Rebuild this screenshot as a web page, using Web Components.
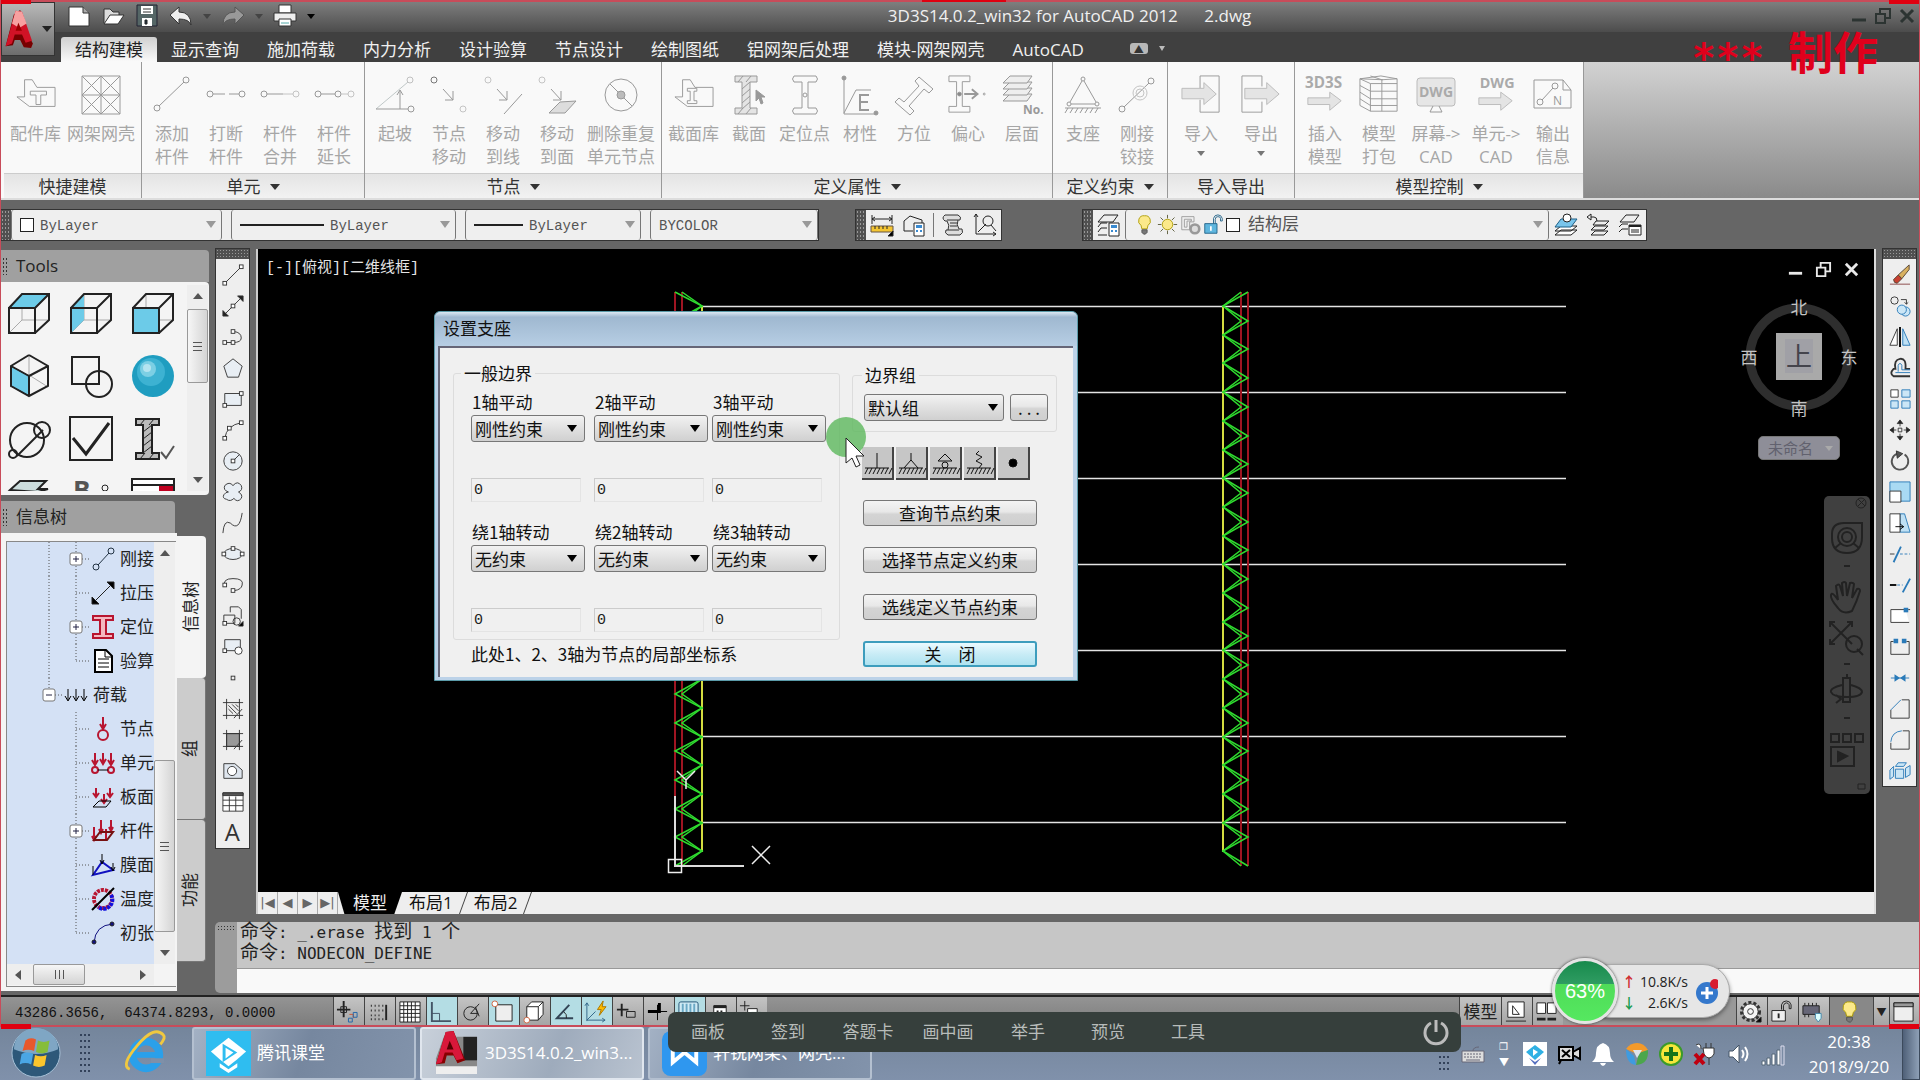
<!DOCTYPE html>
<html lang="zh-CN">
<head>
<meta charset="utf-8">
<title>3D3S14.0.2_win32 for AutoCAD 2012</title>
<style>
	html, body {
		margin: 0;
		height: 100%;
		overflow: hidden;
	}
	body {
		font: 17px/22px "Open Sans", "Noto Sans CJK SC", sans-serif;
		background: #666;
		color: #222;
	}
</style>
</head>
<body>
<cad-desktop></cad-desktop>
<script>
(function() {
	// every icon: [viewBox size, markup]
	const I = {};
	const g = (size, markup) => [size, markup];
	const folder = '<path d="M9 23V5h8l5 8h19v20H14L1 23h8z"/>';
	const ring = (x, y, r) => `<circle cx="${x}" cy="${y}" r="${r || 3}"/>`;
	const dot = (x, y) => `<rect x="${x - 2}" y="${y - 2}" width="4" height="4" fill="#fff"/>`;
	const arrowDR = '<path d="M14 14l10 11M24 16v9h-8"/>';
	const bigArrow = '<path fill="#e4e4e4" stroke="#bbb" d="M3 24h23v-6l12 9-12 10v-6H3z"/>';

	// ribbon
	I.lib = g(42, folder + '<path d="M15 17h17v4h-6v10h-5V21h-6z"/>');
	I.mesh = g(40, '<path d="M1 1h38v38H1zM20 1v38M1 20h38M1 1l38 38M39 1L1 39M20 1L1 20l19 19 19-19z"/>');
	I.add = g(40, ring(5, 33) + ring(34, 5) + '<path d="M7 31L32 7"/>');
	I.cut = g(40, ring(4, 19) + ring(36, 19) + '<path d="M7 19h12M23 19h10"/>');
	I.merge = g(40, ring(4, 19) + '<path d="M7 19h16"/><g stroke="#c4c4c4"><path d="M23 19h10"/>' + ring(36, 19) + '</g>');
	I.extend = g(40, ring(4, 19) + ring(24, 19) + '<path d="M7 19h14"/><g stroke="#c4c4c4"><path d="M27 19h7"/>' + ring(37, 19) + '</g>');
	I.slope = g(40, '<path stroke="#c0c8c8" d="M1 34L33 7"/><g stroke="#c0c0c0">' + ring(35, 5) + '</g><path d="M1 34h32M25 34V16m-3 4l3-5 3 5"/>' + ring(36, 34));
	I.nmove = g(40, '<g stroke="#777">' + ring(5, 5) + '</g>' + arrowDR + '<g stroke="#c4c4c4">' + ring(34, 34) + '</g>');
	I.lmove = g(40, '<g stroke="#c4c4c4">' + ring(5, 5) + '</g>' + arrowDR + '<path d="M21 39l18-20"/>');
	I.pmove = g(40, '<g stroke="#c4c4c4">' + ring(5, 5) + '</g>' + arrowDR + '<path fill="#ddd" d="M12 38l11-11 16-1-11 12z"/>');
	I.dedupe = g(40, ring(20, 20, 16) + '<path d="M9 9l22 22"/><circle cx="20" cy="20" r="4" fill="#bbb"/>');
	I.lib2 = g(42, folder + '<path d="M14 14h10v3h-3v10h3v3H14v-3h3V17h-3z"/>');
	I.section = g(40, '<path fill="#e4e4e4" d="M6 1h22v6h-7v26h7v6H6v-6h7V7H6z"/><path d="M9 7l5-6m3 6l5-6M13 14l8-7M13 21l8-7M13 28l8-7m-8 13l8-7M9 39l5-6m3 6l5-6"/><path fill="#999" d="M27 15v11l3-3 2 6 2-1-2-6h4z"/>');
	I.point = g(40, '<path d="M9 1h22q3 3 0 6h-8v26h8q3 3 0 6H9q-3-3 0-6h8V7H9q-3-3 0-6z"/>' + ring(20, 20, 2));
	I.mat = g(40, '<path d="M4 2v37h32M4 38l12-23h15"/><circle cx="4" cy="3" r="2" fill="#999"/><circle cx="36" cy="38" r="2" fill="#999"/><path stroke-width="2" d="M29 20h-9v15h9M20 27h8"/>');
	I.orient = g(40, '<path d="M25 2l14 12-4 4-5-4L15 31l5 5-4 4L1 27l4-4 5 4 15-16-4-5z"/>');
	I.offset = g(42, '<path d="M1 1h22v6h-8v26h8v6H1v-6h8V7H1z"/><path stroke-width="2" d="M17 20h13m-5-5l6 5-6 5"/><circle cx="12" cy="20" r="2" fill="#888"/><circle cx="38" cy="20" r="1"/>');
	I.layers = g(40, '<g fill="#eee"><path d="M1 26l7-7h22l-5 7z"/><path d="M1 20l7-7h22l-5 7z"/><path d="M1 14l7-7h22l-5 7z"/><path d="M1 8l7-7h22l-5 7z"/></g><text x="21" y="39" font-size="12" font-weight="bold">No.</text>');
	I.support = g(40, ring(20, 4, 2) + ring(6, 29, 2) + ring(34, 29, 2) + '<path d="M19 6L7 27m14-21l12 21M8 29h24M2 33h36M5 33l-3 5m8-5l-3 5m8-5l-3 5m8-5l-3 5m8-5l-3 5m8-5l-3 5m8-5l-3 5"/>');
	I.hinge = g(40, ring(5, 34) + ring(34, 6) + '<path d="M7 32L32 8"/><g stroke="#c4c4c4">' + ring(23, 18, 7) + ring(23, 18, 4) + '</g>');
	I.imp = g(42, '<path d="M20 14V1h20v38H20V26"/><path fill="#e4e4e4" stroke="#bbb" d="M1 14h23V8l13 12-13 11v-6H1z"/>');
	I.exp = g(42, '<path d="M22 12V1H1v38h21V28"/><path fill="#e4e4e4" stroke="#bbb" d="M4 14h23V8l13 12-13 11v-6H4z"/>');
	I.ins = g(42, '<text x="0" y="14" font-size="16" font-weight="bold" style="fill:#aaa">3D3S</text>' + bigArrow);
	I.pack = g(42, '<path d="M1 4l22-3 17 3v34H12L1 32zM12 9h28M12 17h28M12 25h28M12 32h28M1 4l11 5v29M1 11l11 6M1 18l11 7M1 25l11 7M24 5v33M1 4l24 1M12 1l12 4 16-1"/>');
	I.screen = g(40, '<rect x="1" y="3" width="38" height="28" rx="3" fill="#e6e6e6" stroke="#bbb"/><path d="M17 31l-3 6h12l-3-6"/><text x="3" y="22" font-size="14" font-weight="bold" style="fill:#aaa">DWG</text>');
	I.dwg = g(42, '<text x="4" y="14" font-size="15" font-weight="bold" style="fill:#aaa">DWG</text>' + bigArrow);
	I.out = g(40, '<path d="M1 5h29l8 10v18H1zM30 5v10h8"/>' + ring(7, 27) + ring(22, 11) + '<path d="M9 25l11-12"/><text x="20" y="30" font-size="12">N</text>');

	// quick access
	I.newdoc = g(24, '<path fill="#fff" stroke="#333" d="M2 3h14l6 6v13H2z"/><path fill="#aaa" stroke="#333" d="M16 3v6h6"/>');
	I.open = g(24, '<path fill="#ddd" stroke="#333" d="M3 19V5h6l3 3h6v4"/><path fill="#fff" stroke="#333" d="M3 20l6-9h14l-6 9z"/>');
	I.save = g(24, '<path fill="#566" stroke="#223" d="M2 1h20v21H2z"/><path fill="#fff" stroke="none" d="M6 2h12v8H6zM7 14h10v8H7z"/><path stroke="#333" d="M8 5h8M8 8h8"/><path fill="#234" d="M10 16h2v4h-2z"/>');
	I.undo = g(24, '<path fill="#eee" stroke="#333" d="M1 11l9-8v5q12 0 12 13-2-6-12-6v5z"/>');
	I.redo = g(24, '<path fill="#999" stroke="#555" d="M23 11l-9-8v5Q2 8 2 21q2-6 12-6v5z"/>');
	I.print = g(24, '<path fill="#fff" stroke="#333" d="M6 1h12v8H6z"/><path fill="#eee" stroke="#333" d="M1 9h22v8H1z"/><path fill="#fff" stroke="#333" d="M6 15h12v7H6z"/><path stroke="#5aa" d="M8 19h8"/>');
	I.logo = g(44, '<path fill="#700" stroke="none" d="M4 41l9-35 7-5 10 30 4 7-2 5-8-1-4-8h-6l-2 6z"/><path fill="#d11226" stroke="none" d="M4 41L15 2l7 1 11 32-7 2-4-9h-8l-3 10z"/><path fill="#f7a0a0" stroke="none" d="M11 16l4-14 7 1 5 13-8 5z"/><path fill="#900" stroke="none" d="M15 24l3-9 4 9z"/>');

	// toolbars
	I.ruler = g(24, '<path stroke="#222" d="M2 2v9M22 2v9M2 6h20M5 4L2 6l3 2M19 4l3 2-3 2"/><path fill="#f4c532" stroke="#654" d="M1 13h22v6H1z"/><path stroke="#222" d="M5 13v3m4-3v3m4-3v3m4-3v3"/><path fill="#000" d="M23 18v5h-5z"/>');
	I.calc = g(24, '<path stroke="#222" d="M11 18H2V8l6-5 12 4v3"/><path fill="#fff" stroke="#222" d="M12 10h10v13H12z"/><path fill="#3a8ad0" stroke="none" d="M14 12h6v3h-6zM14 17h2v2h-2zM18 17h2v2h-2z"/>');
	I.scroll = g(24, '<path fill="#ddd" stroke="#333" d="M4 2h13q4 2 2 5h-2q-2 5 1 9h3q2 4-2 6H7q-4-2-2-5h2q2-5-1-9H4Q0 5 4 2z"/><path stroke="#333" d="M6 7h11M9 10h7M9 13h7M7 17h11"/>');
	I.find = g(24, '<path stroke="#222" d="M3 1v20h20M1 4l2-3 2 3M20 19l3 2-3 2M5 19l8-8M18 12l5 6"/><circle cx="15" cy="8" r="5" stroke="#222"/>');
	I.layprop = g(24, '<path stroke="#222" d="M1 14l3-4h6M1 19l3-4h6M1 9l6-7h14l-5 7zM1 22h9"/><path fill="#fff" stroke="#222" d="M12 10h10v13H12z"/><path fill="#3a8ad0" stroke="none" d="M14 12h6v3h-6zM14 17h2v2h-2zM18 17h2v2h-2z"/>');
	I.bulb = g(24, '<path fill="#fbe98a" stroke="#a90" d="M12 2a6 6 0 0 1 4 11l-1 4H9l-1-4a6 6 0 0 1 4-11z"/><path fill="#777" stroke="#555" d="M9 18h6v3l-2 2h-2l-2-2z"/>');
	I.sun = g(24, '<circle cx="12" cy="12" r="6" fill="#fbe98a" stroke="#a90"/><path stroke="#553" d="M12 1v4M12 19v4M1 12h4M19 12h4M4 4l3 3M17 17l3 3M4 20l3-3M17 7l3-3"/>');
	I.vpf = g(24, '<path stroke="#999" d="M2 3h14v6h-5v9H2zM5 6h8v2H8v7H5z"/><circle cx="17" cy="17" r="5" stroke="#999" stroke-width="3" fill="#ddd"/>');
	I.unlock = g(24, '<path stroke="#1d5f86" d="M12 11V5q1-4 5-4t5 4v3h-2V5q0-2-3-2t-3 3v5"/><path fill="#5fb6de" stroke="#1d5f86" d="M2 11h14v11H2z"/><path stroke="#fff" stroke-width="2" d="M9 14v5"/>');
	I.curlay = g(24, '<path stroke="#222" fill="#fff" d="M1 22l6-5h16l-6 5zM1 18l6-5h16l-6 5z"/><path fill="#79c5ec" stroke="#1d5f86" d="M1 14l6-8h16l-6 8z"/><circle cx="13" cy="5" r="4" fill="#fff" stroke="#222"/>');
	I.prevlay = g(24, '<path stroke="#222" d="M1 4l4-3v6zM5 4h3q3 0 3 4M5 22l4-4h13l-4 4zM5 17l4-4h13l-4 4zM7 12l3-4h13l-4 4z"/>');
	I.laystate = g(24, '<path stroke="#222" d="M2 9l6-7h13l-5 7zM1 14l3-3h6M1 19l3-3h6"/><path fill="#fff" stroke="#222" d="M11 12h12v10H11z"/><path stroke="#222" stroke-width="2" d="M11 13h12"/><path stroke="#222" d="M13 17h8M13 19h8"/>');

	// draw
	I.line = g(24, '<path d="M3 21L21 3"/>' + dot(3, 21) + dot(21, 3));
	I.xline = g(24, '<path d="M2 22L22 2"/><path fill="#222" d="M1 23v-6l6 6zM23 1v6l-6-6z"/>' + dot(12, 12));
	I.pline = g(24, '<path d="M2 18h10q9 0 9-5 0-6-8-7"/>' + dot(3, 18) + dot(12, 18) + dot(12, 6));
	I.pgon = g(24, '<path fill="#e8eef4" d="M12 2l10 8-4 12H6L2 10z"/>');
	I.rect = g(24, '<path fill="#e8eef4" d="M3 6h18v13H3z"/>' + dot(3, 19) + dot(21, 6));
	I.arc = g(24, '<path d="M3 21Q5 7 21 4"/>' + dot(3, 21) + dot(8, 10) + dot(21, 4));
	I.circle = g(24, '<circle cx="12" cy="12" r="10" fill="#e8eef4"/><path d="M12 12l7-7"/>' + dot(12, 12));
	I.cloud = g(24, '<path fill="#e8eef4" d="M7 12q-6-2-4-7 5-5 9 0 5-6 9 0 2 5-3 7 5 3 3 7-4 5-8 0-4 4-8 1-5-1-3-5 2-3 5-3z"/>');
	I.spline = g(24, '<path d="M1 23Q2 8 9 12q10 10 13-11"/>');
	I.ellipse = g(24, '<ellipse cx="12" cy="12" rx="10" ry="6" fill="#e8eef4"/>' + dot(2, 12) + dot(22, 12) + dot(12, 6));
	I.earc = g(24, '<path d="M3 14Q0 5 12 5t10 7q-1 5-8 6"/>' + dot(3, 12) + dot(12, 18));
	I.insb = g(24, '<path d="M9 8V2h9l3 3v10M2 11h12v9H2z"/><circle cx="16" cy="18" r="4"/><path fill="#000" d="M23 18v5h-5z"/>' + dot(3, 20));
	I.mkb = g(24, '<path fill="#e8eef4" d="M3 4h17v12H3z"/><circle cx="18" cy="16" r="4" fill="#fff"/>' + dot(3, 16));
	I.pt = g(24, '<rect x="10" y="10" width="4" height="4"/>');
	I.hatch = g(24, '<path d="M1 5h22M1 19h22M5 1v22M19 1v22M7 8l9 9M7 12l5 5M11 7l7 7M15 7l3 3M22 12L13 22"/>');
	I.grad = g(24, '<path fill="#999" d="M5 5h14v14H5z"/><path d="M1 5h22M1 19h22M5 1v22M19 1v22M22 12L13 22"/>');
	I.region = g(24, '<path fill="#dfe6ee" d="M2 4h12l8 7v9H2z"/><circle cx="11" cy="12" r="5" fill="#fff"/>');
	I.table = g(24, '<path fill="#fff" d="M1 2h22v20H1zM1 10h22M1 16h22M8 6v16M15 6v16"/><path fill="#555" d="M1 2h22v3H1z"/>');
	I.mtext = g(24, '<text x="3" y="21" font-size="26" style="fill:#333">A</text>');

	// modify
	I.erase = g(24, '<path stroke="#844" d="M1 22h22"/><path fill="#d8b060" stroke="#543" d="M10 12L22 1v5L14 16z"/><path fill="#c84030" stroke="#543" d="M5 17l5-5 4 4-5 5q-4 0-4-4z"/>');
	I.copy = g(24, '<circle cx="6" cy="6" r="4"/><path d="M13 5h6v5m-2-2l2 2 2-2"/><g stroke="#2a7ab8" fill="#cbe6f6"><circle cx="18" cy="18" r="5"/><circle cx="14" cy="16" r="5"/></g>');
	I.mirror = g(24, '<path fill="#fff" d="M9 3v18H1z"/><path fill="#bfe0f4" stroke="#2a7ab8" d="M15 3v18h8z"/><path stroke-width="2" stroke="#000" d="M12 1v22"/>');
	I.offs = g(24, '<path stroke-width="2" d="M23 21H5q-5-3 0-8h2Q5 3 12 2t6 11h5"/><path stroke="#2a7ab8" d="M23 17H7M10 16V9q2-4 4 0v5h9"/>');
	I.array = g(24, '<path fill="#fff" d="M2 2h8v8H2z"/><g stroke="#2a7ab8" fill="#cbe6f6"><path d="M14 2h9v8h-9zM2 14h8v8H2zM14 14h9v8h-9z"/></g>');
	I.move = g(24, '<path fill="#222" d="M12 1l3 4h-6zM12 23l3-4h-6zM1 12l4-3v6zM23 12l-4-3v6z"/><path d="M12 4v4m0 8v4M4 12h4m8 0h4M10 10h4v4h-4z"/>');
	I.rotate = g(24, '<path stroke="#555" stroke-width="2" d="M9 4a9 9 0 1 0 8 1"/><path fill="#555" d="M8 1l7 3-6 5z"/>');
	I.scale = g(24, '<path fill="#a9daf3" stroke="#2a7ab8" d="M1 1h22v21H1z"/><path fill="#fff" d="M1 11h12v12H1z"/>');
	I.stretch = g(24, '<path fill="#bfe0f4" stroke="#2a7ab8" d="M12 2h5l6 20H12z"/><path fill="#fff" d="M1 2h11v20H1z"/><path stroke="#000" d="M7 16h9m-4-3l4 3-4 3"/>');
	I.trim = g(24, '<path d="M1 12h5"/><path stroke="#2a7ab8" stroke-width="2" d="M5 21l8-17"/><path stroke="#2a7ab8" stroke-dasharray="3 2" d="M12 12h11"/>');
	I.ext = g(24, '<path stroke="#000" stroke-width="2" d="M1 12h7"/><path stroke="#2a7ab8" stroke-dasharray="3 2" d="M9 12h6"/><path stroke="#2a7ab8" stroke-width="2" d="M15 20l8-15"/>');
	I.brk1 = g(24, '<path fill="#fff" d="M18 5H2v14h20"/><path fill="#2a7ab8" stroke="none" d="M16 3h5v5h-5z"/><path d="M21 5h2"/>');
	I.brk2 = g(24, '<path d="M5 6H2v14h20V6h-3"/><path fill="#2a7ab8" stroke="none" d="M5 3h5v5H5zM14 3h5v5h-5z"/>');
	I.join = g(24, '<path stroke="#2a7ab8" d="M2 12h20"/><path fill="#2a7ab8" stroke="none" d="M6 8l6 4-6 4zM18 8l-6 4 6 4z"/>');
	I.chamf = g(24, '<path d="M14 2h8v20H2v-9"/><path stroke="#2a7ab8" d="M2 13L13 2"/>');
	I.fillet = g(24, '<path d="M15 2h7v20H2v-7"/><path stroke="#2a7ab8" d="M2 14Q3 3 14 2"/>');
	I.explode = g(24, '<g stroke="#2a7ab8" fill="#cbe6f6"><path d="M7 10h9v10H7zM7 7l3-4h9l-3 4zM18 9l5-3v10l-5 3zM1 11l4-4v11l-4 3z"/></g>');

	// palette
	const cube = '<path stroke-width="2" d="M2 16h26v25H2zM2 16L15 2h27v26L28 41M28 16L42 2"/>';
	const back = '<path stroke="#aaa" d="M15 2v26L2 41M15 28h27"/>';
	I.cubeTop = g(44, back + '<path fill="#6ccbe8" d="M2 16L15 2h27L28 16z"/>' + cube);
	I.cubeLeft = g(44, back + '<path fill="#6ccbe8" stroke="none" d="M2 16L15 2v26L2 41z"/>' + cube);
	I.cubeFront = g(44, back + '<path fill="#6ccbe8" d="M2 16h26v25H2z"/>' + cube);
	I.cubeIso = g(44, '<path stroke="#aaa" d="M22 1v20L3 33m19-12l19 12"/><path fill="#6ccbe8" d="M4 12l18 10v20L4 32z"/><path stroke-width="2" d="M22 1l19 11v20L22 42 4 32V12L22 1M4 12l18 10v20M22 22l19-10"/>');
	I.shapes = g(44, '<g stroke-width="2"><path d="M3 3h27v27H3z"/><circle cx="30" cy="30" r="13"/></g>');
	I.sphere = g(44, '<circle cx="22" cy="22" r="21" fill="#1f9dc0" stroke="none"/><circle cx="20" cy="18" r="14" fill="#3db2d2" stroke="none"/><circle cx="17" cy="15" r="8" fill="#7ccfe4" stroke="none"/><circle cx="16" cy="14" r="4" fill="#b4e4f0" stroke="none"/>');
	I.orbit = g(44, '<g stroke-width="2"><circle cx="20" cy="24" r="17"/><circle cx="35" cy="14" r="8"/><path d="M10 40L36 14"/><circle cx="6" cy="38" r="4"/></g>');
	I.check = g(44, '<path stroke-width="2" d="M1 1h42v43H1z"/><path stroke-width="3" d="M4 22l13 16L40 7"/>');
	I.ibeam = g(44, '<path fill="#bbb" stroke-width="2" d="M5 3h23v6h-7v28h7v6H5v-6h7V9H5z"/><path d="M9 9l5-6m4 6l5-6M12 16l9-7M12 23l9-7M12 30l9-7m-9 14l9-7M9 43l5-6m4 6l5-6"/><path stroke="#555" stroke-width="2" d="M30 36l5 6 8-12"/>');
	I.para = g(44, '<path fill="#cdd" stroke-width="2" d="M3 12L13 3h26l-8 8h10l-10 3z"/>');
	I.bs = g(44, '<text x="4" y="22" font-size="26" font-weight="bold" style="fill:#555">B</text><circle cx="36" cy="10" r="3"/>');
	I.tbl = g(44, '<path fill="#fff" stroke-width="2" d="M1 1h42v20H1zM1 7h42"/><path fill="#c00020" stroke="none" d="M28 8h14v10H28z"/>');

	// tree
	const red = '#b81530';
	I.tHinge = g(24, '<g stroke="#234">' + ring(5, 20) + ring(20, 4) + '<path d="M7 18L18 6"/></g>');
	I.tTension = g(24, '<path d="M3 21L21 3"/><path fill="#000" d="M1 23v-7l7 7zM23 1v7l-7-7z"/>');
	I.tBeam = g(24, `<path fill="#f4b8c0" stroke="${red}" stroke-width="2" d="M2 1h20v4h-7v14h7v4H2v-4h7V5H2z"/>`);
	I.tDoc = g(24, '<path fill="#fff" stroke="#000" stroke-width="2" d="M4 1h11l6 6v16H4z"/><path stroke="#000" d="M7 10h11M7 14h11M7 18h11M14 1v7h7"/>');
	I.tLoad = g(24, '<path stroke="#000" d="M4 6v11m-3-4l3 5 3-5M12 6v11m-3-4l3 5 3-5M20 6v11m-3-4l3 5 3-5"/>');
	I.tNode = g(24, `<g stroke="${red}" stroke-width="2"><path d="M12 0v11m-3-4l3 5 3-5"/><circle cx="12" cy="18" r="5"/></g>`);
	I.tUnit = g(24, `<g stroke="${red}" stroke-width="2"><path d="M4 2v11m-3-4l3 5 3-5M12 2v9m-3-3l3 5 3-5M20 2v11m-3-4l3 5 3-5"/>${ring(4, 19)}${ring(20, 19)}</g><path stroke="#000" d="M7 19h10"/>`);
	I.tPlate = g(24, `<g stroke="${red}" stroke-width="2"><path d="M5 3v8m-3-3l3 4 3-4M13 9v8m-3-3l3 4 3-4M19 3v8m-3-3l3 4 3-4"/></g><path stroke="#000" d="M2 22l6-6h12l-5 6z"/>`);
	I.tRod = g(24, `<g stroke="${red}" stroke-width="2"><path d="M10 1v12m-2-3l2 4 2-4M20 1v10m-2-3l2 4 2-4M3 8v12m-2-3l2 4 2-4M15 10v10"/></g><path stroke="#711" stroke-width="2" d="M3 21l6-8h13l-6 8z"/>`);
	I.tMembrane = g(24, '<path stroke="#1010c0" stroke-width="2" d="M2 22l9-13 11 8z"/><path stroke="#000" d="M11 1v9m-2-3l2 4 2-4M2 13v9M22 10v7m-2-3l2 4 2-4"/>');
	I.tTemp = g(24, `<circle cx="12" cy="12" r="9" stroke="${red}" stroke-width="4" stroke-dasharray="3 1"/><path stroke="#1010e0" stroke-width="4" stroke-dasharray="3 1" d="M20 8a9 9 0 0 1-13 12"/><circle cx="12" cy="12" r="7" fill="#d4e1f5" stroke="none"/><path stroke="#000" stroke-width="2" d="M1 23L23 1"/>`);
	I.tInit = g(24, '<path stroke="#101080" d="M3 22Q4 4 22 3"/><circle cx="3" cy="21" r="2" fill="#101080"/><circle cx="21" cy="3" r="2" fill="#101080"/>');

	// status bar
	I.s1 = g(24, '<path stroke-width="2" d="M1 10h14M8 1v17"/><path d="M5 7h6v6H5z"/><path stroke="#c53" d="M14 15h4v4"/><path stroke="#26a" d="M18 13h4v5h-4zM13 19h4v4h-4z"/>');
	I.s2 = g(24, '<path stroke-dasharray="1 3" stroke-width="2" d="M4 6h15M4 11h15M4 16h12M4 20h15"/><path stroke-width="2" d="M20 5v16"/>');
	I.s3 = g(24, '<path fill="#fff" d="M2 2h21v21H2zM6 2v21M10 2v21M14 2v21M18 2v21M2 6h21M2 10h21M2 14h21M2 18h21"/>');
	I.s4 = g(24, '<path stroke="#456" stroke-width="2" d="M3 2v20h20"/><path stroke="#456" d="M3 14h8v8"/>');
	I.s5 = g(24, '<circle cx="11" cy="14" r="7"/><path d="M11 14L20 4M11 14h8M16 7l4 10"/>');
	I.s6 = g(24, '<path fill="#eee" d="M5 5h17v17H5z"/><circle cx="4" cy="4" r="3" stroke="#c64" fill="#fff"/>');
	I.s7 = g(24, '<path fill="#fff" d="M5 7l5-5h12v13l-5 6H5zM5 7h12v14M17 7l5-5"/><circle cx="5" cy="21" r="3" stroke="#c64" fill="#fff"/>');
	I.s8 = g(24, '<path stroke="#345" stroke-width="2" d="M17 5L4 19h17"/><path d="M11 12q4 3 3 7"/>');
	I.s9 = g(24, '<path stroke="#368" d="M3 22V3m-2 3l2-3 2 3M3 21h19m-3-2l3 2-3 2M3 21l9-9"/><path fill="#fb0" stroke="#a70" d="M20 1l-6 9h4l-2 6 7-9h-4z"/>');
	I.s10 = g(24, '<path stroke-width="2" d="M2 10h12M7 4v13"/><path d="M12 12h9v6h-9z"/>');
	I.s11 = g(24, '<path stroke="#000" stroke-width="3" d="M2 12h12V3"/><path stroke="#000" d="M12 12h10M12 5v16"/>');
	I.s12 = g(24, '<rect x="2" y="2" width="20" height="20" rx="2" fill="#cfeaf4" stroke="#257"/><path stroke="#6aa8c4" stroke-width="14" stroke-dasharray="2 2" d="M5 11h14"/>');
	I.s13 = g(24, '<path fill="#fff" d="M6 6h13v18H6z"/><path stroke-width="3" d="M6 7h13"/><path stroke-width="2" stroke-dasharray="2 2" d="M9 12h8M9 16h8"/>');
	I.s14 = g(24, '<path d="M1 6h10M6 1v10"/><path fill="#fff" d="M9 9h10v10H9z"/><path fill="#cfc" stroke="#274" d="M13 13h10v10H13z"/>');
	I.model = g(24, '<path fill="#fff" d="M4 2h17v16H4zM2 22h21"/><path d="M9 6v9h7z"/>');
	I.qview = g(24, '<path fill="#fff" d="M2 3h9v11H2zM13 3h9v11h-9z"/><path stroke-width="3" d="M2 20h9M13 20h9"/>');
	I.gear = g(24, '<circle cx="12" cy="12" r="9" stroke="#333" stroke-width="4" stroke-dasharray="3 2"/><circle cx="12" cy="12" r="8" fill="#f4f4f4" stroke="#333"/><circle cx="12" cy="12" r="3" stroke="#333"/><path fill="#000" d="M23 18v5h-5z"/>');
	I.slock = g(24, '<path d="M12 10V5q1-4 5-4t5 4v4h-2V5q-1-2-3-2t-3 3v5"/><path fill="#eee" d="M2 11h14v11H2z"/><path stroke-width="2" d="M9 14v5"/>');
	I.chip = g(24, '<path fill="#667" d="M2 6h17v9H2zM4 3v3m4-3v3m4-3v3m4-3v3M4 15v3m4-3v3"/><path fill="#dff" stroke="#48a" d="M15 14h6v5l-3 4-3-4z"/>');
	I.win = g(24, '<path fill="#eee" d="M2 3h20v19H2z"/><path fill="#999" d="M2 3h20v4H2z"/>');

	// dialog
	const ground = '<path d="M3 20h24M6 20l-3 6m7-6l-3 6m7-6l-3 6m7-6l-3 6m7-6l-3 6m7-6l-3 6m7-6l-3 6"/>';
	I.fix = g(30, '<path d="M15 5v15"/>' + ground);
	I.pin = g(30, '<path d="M15 5v8M15 12l-7 8m7-8l7 8"/>' + ground);
	I.roll = g(30, '<path d="M15 6l-7 7h14z"/><circle cx="15" cy="17" r="3"/>' + ground);
	I.spring = g(30, '<path d="M15 3l-3 3 6 3-6 4 6 3-3 4"/>' + ground);
	I.free = g(30, '<circle cx="15" cy="15" r="4" fill="#000"/>');

	// taskbar
	I.start = g(52, '<circle cx="26" cy="26" r="25" fill="#2d5879" stroke="#a9c3d8"/><path fill="#7fa6c4" stroke="none" d="M3 22a23 22 0 0 1 46 0q-22 10-46 0z"/><path fill="#e8582c" stroke="none" d="M15 13q5-4 11-1l-2 12q-6-3-12 0z"/><path fill="#86bd3a" stroke="none" d="M28 13q6 3 12 0l-2 12q-6 3-12 0z"/><path fill="#4aa6e4" stroke="none" d="M11 27q6-3 12 0l-2 11q-6-3-12 0z"/><path fill="#fbc52c" stroke="none" d="M25 28q6 3 12 0l-2 11q-6 3-12 0z"/>');
	I.ie = g(46, '<circle cx="23" cy="25" r="14" stroke="#2aa0ea" stroke-width="8"/><path stroke="#7f90a8" stroke-width="5" d="M28 31h14"/><path stroke="#2aa0ea" stroke-width="6" d="M12 25h24"/><path stroke="#f0c840" stroke-width="3" d="M6 40Q-4 36 14 15T41 4q3 3-3 10"/>');
	I.tencent = g(46, '<path fill="#2fbdf0" stroke="none" d="M0 0h46v46H0z"/><path fill="#fff" stroke="none" d="M23 7l18 14-9 8-9 7-9-7-9-8z"/><path fill="#2fbdf0" stroke="none" d="M17 13l15 9-15 10z"/><path fill="#fff" stroke="none" d="M20 17l8 5-8 6zM14 33l9 6 9-6v4l-9 6-9-6z"/>');
	I.acad = g(46, '<path fill="#888" stroke="none" d="M10 6h34v38H2V28z"/><path fill="#222" stroke="none" d="M30 6h14v24H30z"/><path fill="#eee" stroke="none" d="M2 36h42v8H2z"/><path fill="#800" stroke="none" d="M2 34L12 1l8-1 12 30-8 3-4-8h-7l-2 8z"/><path fill="#d8183a" stroke="none" d="M2 34L12 1l8-1 10 28-7 2-4-8h-8l-3 10z"/><path fill="#500" stroke="none" d="M13 19l3-9 4 9z"/>');
	I.wps = g(46, '<rect width="46" height="46" rx="9" fill="#2f97ef" stroke="none"/><path stroke="#fff" stroke-width="4" d="M11 14v18l12-10 12 10V14"/>');
	I.kbd = g(24, '<path fill="#ddd" stroke="#667" d="M1 9h22v11H1z"/><path stroke="#667" stroke-dasharray="2 1" d="M3 12h18M3 15h18"/><path stroke="#667" d="M5 18h14M12 9q0-4 6-4"/>');
	I.tTencent = g(24, '<path fill="#fff" stroke="none" d="M0 0h24v24H0z"/><path fill="#2fb0e4" stroke="none" d="M12 3l9 7-9 8-9-8z"/><path fill="#fff" stroke="none" d="M10 7l5 3-5 4z"/><path fill="#5670c0" stroke="none" d="M6 16l6 4 6-4-6 7z"/>');
	I.cam = g(24, '<path fill="#ddd" stroke="#000" stroke-width="2" d="M2 5h14v13H2zM16 10l7-4v11l-7-4z"/><path stroke="#000" stroke-width="2" d="M5 8l8 7M13 8l-8 7M4 18l-2 4"/>');
	I.bell = g(24, '<path fill="#fff" stroke="none" d="M12 1q7 2 7 10 0 6 4 9H1q4-3 4-9 0-8 7-10zM9 21h6q-1 3-3 3t-3-3z"/>');
	I.swirl = g(24, '<path fill="#f39a2b" stroke="none" d="M12 1q7 0 11 7l-11 4L1 7q4-6 11-6z"/><path fill="#3f9be0" stroke="none" d="M1 7l8 7 2 9Q1 22 1 7z"/><path fill="#4ca64c" stroke="none" d="M23 8q1 14-12 15l3-12z"/><path fill="#dfe4ec" stroke="none" d="M8 8h9l-5 8z"/>');
	I.safe = g(24, '<circle cx="12" cy="12" r="11" fill="#f6e63a" stroke="#3a9a2a" stroke-width="2"/><path stroke="#16741a" stroke-width="4" d="M12 5v14M5 12h14"/>');
	I.plug = g(24, '<path fill="#fff" stroke="#333" d="M10 6h11v6q-2 4-5 4t-5-4zM13 1v5M18 1v5M16 16v7M3 3q5-3 5 4"/><path stroke="#c00010" stroke-width="4" d="M2 12l9 10M11 12L2 22"/>');
	I.vol = g(24, '<path fill="#fff" stroke="#456" d="M2 9h4l6-6v18l-6-6H2z"/><path stroke="#fff" stroke-width="2" d="M15 8q3 4 0 8M18 5q5 7 0 14"/>');
	I.bars = g(24, '<path fill="#fff" stroke="#567" d="M1 19h3v4H1zM6 16h3v7H6zM11 12h3v11h-3zM16 8h3v15h-3z"/><path stroke="#dde" d="M20 4h3v19h-3z"/>');
	I.power = g(26, '<path stroke="#bbb" stroke-width="3" d="M8 4a11 11 0 1 0 10 0M13 1v12"/>');
	I.minimize = g(18, '<path stroke-width="3" d="M2 13h14"/>');
	I.restore = g(18, '<path stroke-width="2" d="M2 7h9v9H2zM6 6V2h10v9h-4"/>');
	I.close = g(18, '<path stroke-width="3" d="M3 3l12 12M15 3L3 15"/>');

	// registers an element whose shadow root is filled from a template
	function define(name, html, setup) {
		let template = document.createElement("template");
		template.innerHTML = html;
		customElements.define(name, class extends HTMLElement {
			constructor() {
				super();
				this._shadowRoot = this.attachShadow({mode: "open"});
				this._shadowRoot.appendChild(template.content.cloneNode(true));
			}
			connectedCallback() {
				if (setup && !this._ready) {
					this._ready = true;
					setup.call(this, this._shadowRoot);
				}
			}
		});
	}

	// puts the host's icon in the place of the <b class="icon"> mark
	function placeIcon(host, root) {
		let icon = document.createElement("cad-icon");
		icon.setAttribute("name", host.getAttribute("icon"));
		root.querySelector("b.icon").replaceWith(icon);
	}

	const icons = (list, label) => list.split(" ").map(n => `<button type="button" aria-label="${label} ${n}"><cad-icon name="${n}"></cad-icon></button>`).join("");

	define("cad-icon", `
		<style>
		:host { display: block; flex: none; width: 24px; height: 24px; }
		svg { display: block; width: 100%; height: 100%; overflow: visible; fill: none; stroke: currentColor; }
		text { fill: currentColor; stroke: none; font-family: "Open Sans", sans-serif; }
		</style>
		<svg aria-hidden="true"></svg>
	`, function(root) {
		let icon = I[this.getAttribute("name")];
		let svg = root.querySelector("svg");
		svg.setAttribute("viewBox", `0 0 ${icon[0]} ${icon[0]}`);
		svg.innerHTML = icon[1];
	});

	define("title-bar", `
		<style>
		:host { display: flex; align-items: center; height: 32px; background: linear-gradient(#828282, #6c6c6c 40%, #575757 80%, #4c4c4c); color: #f0f0f0; }
		.quick { display: flex; align-items: center; gap: 10px; padding-left: 67px; flex: 820 0 0; }
		button { border: 0; padding: 0; background: none; color: #222; display: block; }
		i { width: 0; border: 4px solid transparent; border-top: 5px solid #444; border-bottom: 0; }
		i.on { border-top-color: #000; }
		.text { flex: none; white-space: pre; }
		.win { flex: 664 0 0; display: flex; justify-content: flex-end; gap: 6px; padding-right: 4px; }
		.win cad-icon { width: 18px; height: 18px; color: #2c3432; }
		</style>
		<div class="quick">
			${icons("newdoc open save undo", "快速访问")}<i></i>${icons("redo", "快速访问")}<i></i>${icons("print", "快速访问")}<i class="on"></i>
		</div>
		<div class="text"><slot></slot></div>
		<div class="win">${icons("minimize restore close", "窗口")}</div>
	`);

	define("ribbon-tabs", `
		<style>
		:host { display: flex; align-items: flex-end; height: 30px; padding-left: 61px; background: #404040; color: #f0f0f0; }
		button { font: inherit; color: inherit; border: 0; background: none; padding: 0 14px; height: 25px; line-height: 24px; white-space: nowrap; }
		button.on { background: linear-gradient(#d0d0d0, #fafafa); color: #222; border-radius: 3px 3px 0 0; }
		.fold { width: 18px; height: 11px; margin: 0 11px 8px 32px; border-radius: 3px; background: #b8b8b8; padding: 0; line-height: 10px; font-size: 10px; color: #333; }
		i { border: 3px solid transparent; border-top: 5px solid #bbb; border-bottom: 0; margin-bottom: 11px; }
		</style>
		<button type="button" class="on">结构建模</button>
		<button type="button">显示查询</button>
		<button type="button">施加荷载</button>
		<button type="button">内力分析</button>
		<button type="button">设计验算</button>
		<button type="button">节点设计</button>
		<button type="button">绘制图纸</button>
		<button type="button">铝网架后处理</button>
		<button type="button">模块-网架网壳</button>
		<button type="button">AutoCAD</button>
		<button type="button" class="fold">▲</button><i></i>
	`);

	define("ribbon-button", `
		<style>
		:host { display: block; }
		button { display: flex; flex-direction: column; align-items: center; min-width: 54px; padding: 13px 3px 0; border: 0; background: none; font: inherit; line-height: 23px; color: #a6a6a6; white-space: nowrap; }
		cad-icon { width: 40px; height: 40px; margin-bottom: 7px; color: #999; }
		i { display: none; border: 4px solid transparent; border-top: 5px solid #777; border-bottom: 0; margin-top: 6px; }
		:host([menu]) i { display: block; }
		:host([menu]) button, :host([wide]) button { min-width: 60px; }
		</style>
		<button type="button"><b class="icon"></b><span><slot></slot></span><i></i></button>
	`, function(root) {
		placeIcon(this, root);
	});

	define("ribbon-panel", `
		<style>
		:host { display: flex; flex-direction: column; border-right: 1px solid #999; background: #f9f9f9; }
		.body { display: flex; flex: 1; padding: 0 3px; }
		.name { height: 25px; padding-top: 2px; box-sizing: border-box; border-top: 1px solid #ccc; background: linear-gradient(#e4e4e4, #f2f2f2); display: flex; justify-content: center; align-items: center; gap: 9px; color: #333; }
		i { border: 5px solid transparent; border-top: 6px solid #333; border-bottom: 0; }
		:host(:not([menu])) i { display: none; }
		</style>
		<div class="body"><slot></slot></div>
		<div class="name"><span></span><i></i></div>
	`, function(root) {
		root.querySelector(".name span").textContent = this.getAttribute("name");
	});

	define("ribbon-bar", `
		<style>
		:host { display: flex; height: 136px; border-bottom: 2px solid #ddd; background: linear-gradient(#d2d2d2, #8a8a8a); }
		.first { padding-left: 4px; }
		</style>
		<ribbon-panel name="快捷建模" class="first">
			<ribbon-button icon="lib">配件库</ribbon-button>
			<ribbon-button icon="mesh">网架网壳</ribbon-button>
		</ribbon-panel>
		<ribbon-panel name="单元" menu>
			<ribbon-button icon="add">添加<br>杆件</ribbon-button>
			<ribbon-button icon="cut">打断<br>杆件</ribbon-button>
			<ribbon-button icon="merge">杆件<br>合并</ribbon-button>
			<ribbon-button icon="extend">杆件<br>延长</ribbon-button>
		</ribbon-panel>
		<ribbon-panel name="节点" menu>
			<ribbon-button icon="slope">起坡</ribbon-button>
			<ribbon-button icon="nmove">节点<br>移动</ribbon-button>
			<ribbon-button icon="lmove">移动<br>到线</ribbon-button>
			<ribbon-button icon="pmove">移动<br>到面</ribbon-button>
			<ribbon-button icon="dedupe">删除重复<br>单元节点</ribbon-button>
		</ribbon-panel>
		<ribbon-panel name="定义属性" menu>
			<ribbon-button icon="lib2">截面库</ribbon-button>
			<ribbon-button icon="section">截面</ribbon-button>
			<ribbon-button icon="point">定位点</ribbon-button>
			<ribbon-button icon="mat">材性</ribbon-button>
			<ribbon-button icon="orient">方位</ribbon-button>
			<ribbon-button icon="offset">偏心</ribbon-button>
			<ribbon-button icon="layers">层面</ribbon-button>
		</ribbon-panel>
		<ribbon-panel name="定义约束" menu>
			<ribbon-button icon="support">支座</ribbon-button>
			<ribbon-button icon="hinge">刚接<br>铰接</ribbon-button>
		</ribbon-panel>
		<ribbon-panel name="导入导出">
			<ribbon-button icon="imp" menu>导入</ribbon-button>
			<ribbon-button icon="exp" menu>导出</ribbon-button>
		</ribbon-panel>
		<ribbon-panel name="模型控制" menu>
			<ribbon-button icon="ins">插入<br>模型</ribbon-button>
			<ribbon-button icon="pack">模型<br>打包</ribbon-button>
			<ribbon-button icon="screen" wide>屏幕-&gt;<br>CAD</ribbon-button>
			<ribbon-button icon="dwg" wide>单元-&gt;<br>CAD</ribbon-button>
			<ribbon-button icon="out">输出<br>信息</ribbon-button>
		</ribbon-panel>
	`);

	define("tool-group", `
		<style>
		:host { display: flex; align-items: center; height: 30px; border: 1px solid #333; background: #eee; }
		.grip { align-self: stretch; flex: none; width: 10px; background: #505050 radial-gradient(#999 1px, transparent 1px) 0 0 / 3px 4px; }
		</style>
		<span class="grip"></span><slot></slot>
	`);

	define("cad-combo", `
		<style>
		:host { display: flex; align-items: center; box-sizing: border-box; height: 30px; padding: 0 8px; gap: 6px; border-radius: 3px; background: #efefef; border-left: 1px solid #777; border-right: 1px solid #777; color: #555; }
		select { appearance: none; flex: 1; min-width: 0; border: 0; padding: 2px 0 0; background: none; font: 14px/20px "Liberation Mono", "Noto Sans CJK SC", monospace; color: #555; }
		:host([large]) select { font-size: 17px; line-height: 24px; }
		i { border: 5px solid transparent; border-top: 7px solid #999; border-bottom: 0; margin-right: -3px; }
		</style>
		<slot></slot><select><option></option></select><i></i>
	`, function(root) {
		root.querySelector("option").textContent = this.getAttribute("value");
		root.querySelector("select").setAttribute("aria-label", this.getAttribute("label"));
	});

	define("tool-row", `
		<style>
		:host { display: flex; align-items: center; height: 48px; box-sizing: border-box; padding-top: 1px; flex: none; }
		button { border: 0; padding: 0; background: none; display: block; color: #222; margin: 0 4px; }
		.sw { width: 12px; height: 12px; border: 1px solid #222; background: #fff; flex: none; }
		.ln { height: 2px; background: #222; flex: none; }
		.sep { width: 1px; height: 24px; background: #777; margin: 0 3px; }
		.c1 { width: 211px; } .c2 { width: 225px; margin: 0 9px; } .c3 { width: 176px; margin-right: 9px; } .c4 { width: 168px; }
		.g2 { margin-left: 36px; } .g3 { margin-left: 80px; }
		.lay { width: 424px; gap: 2px; margin-right: 1px; }
		.lay cad-icon { width: 21px; height: 21px; }
		.lay .sw { margin-right: 6px; }
		</style>
		<tool-group>
			<cad-combo class="c1" value="ByLayer" label="颜色"><span class="sw"></span></cad-combo>
			<cad-combo class="c2" value="ByLayer" label="线型"><span class="ln" style="width:84px"></span></cad-combo>
			<cad-combo class="c3" value="ByLayer" label="线宽"><span class="ln" style="width:49px"></span></cad-combo>
			<cad-combo class="c4" value="BYCOLOR" label="打印样式"></cad-combo>
		</tool-group>
		<tool-group class="g2">
			${icons("ruler calc", "工具")}<span class="sep"></span>${icons("scroll find", "工具")}
		</tool-group>
		<tool-group class="g3">
			${icons("layprop", "图层")}
			<cad-combo class="lay" large value="结构层" label="图层"><cad-icon name="bulb"></cad-icon><cad-icon name="sun"></cad-icon><cad-icon name="vpf"></cad-icon><cad-icon name="unlock"></cad-icon><span class="sw"></span></cad-combo>
			${icons("curlay prevlay laystate", "图层")}
		</tool-group>
	`);

	define("side-tools", `
		<style>
		:host { display: block; flex: none; align-self: flex-start; width: 33px; border: 1px solid #333; background: #eee; }
		.grip { display: block; height: 10px; background: #505050 radial-gradient(#999 1px, transparent 1px) 6px 0 / 3px 3px; }
		button { display: flex; align-items: center; justify-content: center; width: 100%; height: 31px; padding: 0; border: 0; background: none; color: #333; }
		cad-icon { width: 22px; height: 22px; }
		</style>
		<span class="grip"></span>
	`, function(root) {
		root.innerHTML += icons(this.getAttribute("icons"), this.getAttribute("label"));
	});

	define("scroll-bar", `
		<style>
		:host { display: flex; flex-direction: column; align-items: center; width: 21px; background: #eee; box-sizing: border-box; padding: 8px 0; }
		i { border: 5px solid transparent; }
		.a { border-top: 0; border-bottom: 6px solid #555; }
		.b { border-bottom: 0; border-top: 6px solid #555; }
		.track { flex: 1; width: 100%; display: flex; flex-direction: column; margin: 4px 0; }
		.thumb { box-sizing: border-box; border: 1px solid #999; border-radius: 2px; background: linear-gradient(90deg, #f6f6f6, #d4d4d4); display: flex; align-items: center; justify-content: center; }
		.thumb::after { content: ""; width: 9px; height: 9px; background: repeating-linear-gradient(#555 0 1px, transparent 1px 4px); }
		:host([across]) { flex-direction: row; width: auto; height: 21px; padding: 0 8px; }
		:host([across]) .a { border: 5px solid transparent; border-left: 0; border-right: 6px solid #555; }
		:host([across]) .b { border: 5px solid transparent; border-right: 0; border-left: 6px solid #555; }
		:host([across]) .track { flex-direction: row; height: 100%; width: auto; margin: 0 8px; }
		:host([across]) .thumb { background: linear-gradient(#f6f6f6, #d4d4d4); }
		:host([across]) .thumb::after { background: repeating-linear-gradient(90deg, #555 0 1px, transparent 1px 4px); }
		</style>
		<i class="a"></i><div class="track"><span class="gap"></span><span class="thumb"></span></div><i class="b"></i>
	`, function(root) {
		root.querySelector(".gap").style.flex = "0 0 " + this.getAttribute("from");
		root.querySelector(".thumb").style.flex = "0 0 " + this.getAttribute("size");
	});

	define("palette-head", `
		<style>
		:host { display: flex; align-items: center; height: 32px; gap: 8px; padding-left: 2px; background: #a0a0a0; border-radius: 0 4px 0 0; color: #222; }
		span { width: 6px; height: 18px; background: radial-gradient(#333 1px, transparent 1px) 0 0 / 3px 4px; }
		</style>
		<span></span><slot></slot>
	`);

	define("tool-palette", `
		<style>
		:host { display: block; }
		.body { display: flex; height: 213px; box-sizing: border-box; background: #f4f4f4; border-radius: 0 4px 4px 0; padding: 3px 1px 4px 0; }
		.grid { flex: 1; display: grid; grid-template-columns: repeat(3, 62px); grid-auto-rows: 62px; overflow: hidden; }
		button { border: 0; padding: 7px 0 0 7px; background: none; color: #222; display: flex; align-items: flex-start; }
		cad-icon { width: 44px; height: 44px; }
		</style>
		<palette-head>Tools</palette-head>
		<div class="body">
			<div class="grid">${icons("cubeTop cubeLeft cubeFront cubeIso shapes sphere orbit check ibeam para bs tbl", "Tools")}</div>
			<scroll-bar from="6px" size="74px"></scroll-bar>
		</div>
	`);

	define("tree-row", `
		<style>
		:host { display: flex; align-items: center; height: 34px; white-space: nowrap; color: #222; }
		svg { flex: none; height: 34px; fill: none; stroke: #555; }
		span { margin-left: 5px; }
		</style>
		<svg></svg><b class="icon"></b><span><slot></slot></span>
	`, function(root) {
		// guides: a = outer line, b = inner line, t = ends here, + or - = expander
		let guide = this.getAttribute("guide");
		let top = guide.includes("-");
		let x = top ? 42 : 69;
		let svg = root.querySelector("svg");
		let draw = "";
		if (guide.includes("a")) draw += `<path stroke-dasharray="1 2" d="M42 0v${top ? 12 : 34}"/>`;
		if (guide.includes("b")) draw += `<path stroke-dasharray="1 2" d="M69 0v${guide.includes("t") ? 17 : 34}"/>`;
		draw += `<path stroke-dasharray="1 2" d="M${x} 17h15"/>`;
		if (/[+-]/.test(guide)) draw += `<rect x="${x - 6}" y="11" width="12" height="12" rx="2" fill="#fff" stroke="#777"/><path stroke="#224" d="M${x - 3} 17h6${top ? "" : `M${x} 14v6`}"/>`;
		svg.setAttribute("width", top ? 57 : 84);
		svg.innerHTML = draw;
		placeIcon(this, root);
	});

	define("info-tree", `
		<style>
		:host { display: flex; flex-direction: column; flex: 1; min-height: 0; }
		palette-head { width: 175px; box-sizing: border-box; }
		.main { flex: 1; min-height: 0; display: flex; align-items: flex-start; }
		.body { align-self: stretch; width: 177px; box-sizing: border-box; padding: 8px 1px 4px 6px; background: #f4f4f4; display: flex; flex-direction: column; }
		.frame { flex: 1; min-height: 0; border: 1px solid #888; border-right: 0; display: grid; grid-template: minmax(0, 1fr) 22px / minmax(0, 1fr) 22px; }
		.rows { overflow: hidden; background: #d4e1f5; }
		.tabs { display: flex; flex-direction: column; padding-top: 3px; }
		.tabs button { writing-mode: vertical-rl; text-orientation: sideways; transform: rotate(180deg); width: 29px; height: 142px; font: inherit; padding: 0 0 0 2px; border: 1px solid #777; border-width: 1px 0 0 1px; border-radius: 4px 0 0 4px; background: #ccc; color: #222; }
		.tabs button.on { background: #f4f4f4; border: 0; }
		</style>
		<palette-head>信息树</palette-head>
		<div class="main">
			<div class="body">
				<div class="frame">
					<div class="rows">
						<tree-row guide="ab+" icon="tHinge">刚接</tree-row>
						<tree-row guide="ab" icon="tTension">拉压</tree-row>
						<tree-row guide="ab+" icon="tBeam">定位</tree-row>
						<tree-row guide="abt" icon="tDoc">验算</tree-row>
						<tree-row guide="a-" icon="tLoad">荷载</tree-row>
						<tree-row guide="b" icon="tNode">节点</tree-row>
						<tree-row guide="b" icon="tUnit">单元</tree-row>
						<tree-row guide="b" icon="tPlate">板面</tree-row>
						<tree-row guide="b+" icon="tRod">杆件</tree-row>
						<tree-row guide="b" icon="tMembrane">膜面</tree-row>
						<tree-row guide="b" icon="tTemp">温度</tree-row>
						<tree-row guide="bt" icon="tInit">初张</tree-row>
					</div>
					<scroll-bar from="200px" size="172px"></scroll-bar>
					<scroll-bar across from="4px" size="52px"></scroll-bar>
				</div>
			</div>
			<div class="tabs">
				<button type="button" class="on">信息树</button>
				<button type="button">组</button>
				<button type="button">功能</button>
			</div>
		</div>
	`);

	define("axis-field", `
		<style>
		:host { display: flex; flex-direction: column; width: 114px; }
		label { margin-left: 1px; line-height: 26px; }
		.box { display: grid; align-items: center; }
		.box > * { grid-area: 1 / 1; }
		select { appearance: none; width: 100%; height: 27px; border: 1px solid #777; border-radius: 3px; padding: 0 3px; background: linear-gradient(#f2f2f2, #ddd 60%, #d0d0d0); font: inherit; line-height: 22px; color: #111; }
		i { justify-self: end; margin-right: 8px; border: 5px solid transparent; border-top: 7px solid #000; border-bottom: 0; pointer-events: none; }
		input { width: 110px; box-sizing: border-box; height: 24px; margin-top: 36px; border: 1px solid; border-color: #ccc #e4e4e4 #e4e4e4 #ccc; background: #f0f0f0; padding: 0 2px; font: 15px/20px "Liberation Mono", monospace; color: #222; }
		</style>
		<label for="kind"></label>
		<div class="box"><select id="kind"><option></option></select><i></i></div>
		<input type="text" value="0">
	`, function(root) {
		root.querySelector("label").textContent = this.getAttribute("label");
		root.querySelector("option").textContent = this.getAttribute("value");
		root.querySelector("input").setAttribute("aria-label", this.getAttribute("label") + "值");
	});

	define("support-dialog", `
		<style>
		:host { display: block; box-sizing: border-box; border: 1px solid #5a9aa8; border-radius: 6px 6px 0 0; background: #bcd2e8; padding: 0 4px 4px 3px; color: #111; font-family: "Noto Sans CJK SC", sans-serif; }
		header { height: 34px; line-height: 32px; padding-left: 8px; margin: 0 -4px 0 -3px; border-radius: 6px 6px 0 0; background: linear-gradient(#dce8f2, #9fb8d0 15%, #b7cee4); }
		.body { display: flex; justify-content: space-between; height: 331px; box-sizing: border-box; background: #f0f0f0; border: 1px solid #667; border-width: 2px 0 0 2px; padding: 13px 16px 0 13px; }
		fieldset { box-sizing: border-box; margin: 0; border: 1px solid #dcdcdc; border-radius: 3px; min-width: 0; }
		legend { padding: 0 3px; line-height: 24px; }
		.general { width: 387px; height: 279px; padding: 4px 0 0 17px; }
		.general legend { margin-left: -10px; }
		.axes { display: grid; grid-template-columns: 123px 118px 114px; row-gap: 17px; }
		p { margin: 3px 0 0 18px; white-space: nowrap; }
		.right { width: 205px; padding-top: 2px; }
		.group { display: flex; align-items: flex-start; gap: 6px; height: 69px; padding: 7px 8px 0 11px; }
		.group legend { margin-left: -2px; }
		.box { flex: 1; display: grid; align-items: center; }
		.box > * { grid-area: 1 / 1; }
		select { appearance: none; width: 100%; height: 27px; border: 1px solid #777; border-radius: 3px; padding: 0 3px; background: linear-gradient(#f2f2f2, #ddd 60%, #d0d0d0); font: inherit; line-height: 22px; color: #111; }
		.box i { justify-self: end; margin-right: 6px; border: 5px solid transparent; border-top: 7px solid #000; border-bottom: 0; pointer-events: none; }
		.dots { width: 38px; height: 27px; padding: 0; }
		button { font: inherit; color: #111; border: 1px solid #777; border-radius: 3px; background: linear-gradient(#f4f4f4, #e8e8e8 45%, #d4d4d4 55%, #cfcfcf); }
		.icons { display: flex; gap: 2px; margin: 15px 0 20px 10px; }
		.icons button { width: 32px; height: 33px; padding: 0; border: 0; border-right: 2px solid #444; border-bottom: 2px solid #444; border-radius: 0; background: #c6c6c6; }
		.icons cad-icon { width: 30px; height: 30px; }
		.wide { display: block; box-sizing: border-box; width: 174px; height: 26px; line-height: 20px; margin: 0 0 21px 11px; padding: 0; white-space: pre; }
		.ok { border: 2px solid #3d9dbd; background: linear-gradient(#eafaff, #c9ecf6 50%, #aee2f0); }
		</style>
		<header>设置支座</header>
		<div class="body">
			<div>
				<fieldset class="general">
					<legend>一般边界</legend>
					<div class="axes">
						<axis-field label="1轴平动" value="刚性约束"></axis-field>
						<axis-field label="2轴平动" value="刚性约束"></axis-field>
						<axis-field label="3轴平动" value="刚性约束"></axis-field>
						<axis-field label="绕1轴转动" value="无约束"></axis-field>
						<axis-field label="绕2轴转动" value="无约束"></axis-field>
						<axis-field label="绕3轴转动" value="无约束"></axis-field>
					</div>
				</fieldset>
				<p>此处1、2、3轴为节点的局部坐标系</p>
			</div>
			<div class="right">
				<fieldset class="group">
					<legend>边界组</legend>
					<div class="box"><select aria-label="边界组"><option>默认组</option></select><i></i></div>
					<button type="button" class="dots">. . .</button>
				</fieldset>
				<div class="icons">${icons("fix pin roll spring free", "约束")}</div>
				<button type="button" class="wide">查询节点约束</button>
				<button type="button" class="wide">选择节点定义约束</button>
				<button type="button" class="wide">选线定义节点约束</button>
				<button type="button" class="wide ok">关　闭</button>
			</div>
		</div>
	`);

	define("view-cube", `
		<style>
		:host { display: block; width: 122px; color: #bbb; }
		svg { display: block; width: 122px; height: 128px; }
		text { font-size: 17px; fill: #c4c4c4; text-anchor: middle; }
		.top { font-size: 26px; fill: #44444c; }
		button { display: flex; justify-content: space-between; align-items: center; width: 82px; height: 24px; margin: 15px auto 0; border: 1px solid #777; border-radius: 5px; background: #8e8e98; color: #61616e; font: 15px/20px "Noto Sans CJK SC", sans-serif; padding: 0 6px 0 9px; }
		i { border: 4px solid transparent; border-top: 5px solid #aaa; border-bottom: 0; }
		</style>
		<svg viewBox="0 0 122 128">
			<circle cx="61" cy="64" r="49" fill="none" stroke="#2e2e2e" stroke-width="9"/>
			<rect x="38" y="40" width="46" height="47" fill="#a9a9a9"/>
			<rect x="47" y="46" width="28" height="34" fill="#a0a0a6"/>
			<text class="top" x="61" y="73">上</text>
			<text x="61" y="21">北</text><text x="11" y="71">西</text><text x="111" y="71">东</text><text x="61" y="122">南</text>
		</svg>
		<button type="button">未命名<i></i></button>
	`);

	define("nav-bar", `
		<style>
		:host { display: block; width: 46px; height: 298px; border-radius: 5px; background: #404040; }
		svg { display: block; fill: none; stroke: #222; stroke-width: 2; }
		</style>
		<svg viewBox="0 0 46 298" width="46" height="298">
			<path stroke-width="1" d="M34 3l7 7M41 3l-7 7M34 288h7v5h-7z"/><circle cx="37" cy="7" r="5" stroke-width="1"/>
			<path d="M8 38q0-11 12-11h18v14q0 16-15 16T8 42z"/><circle cx="23" cy="41" r="9"/><circle cx="23" cy="41" r="5"/><path d="M11 52l6-5M35 52l-6-5M20 70h6"/>
			<path d="M14 112q-8-9-7-13t7 5l-2-14q3-3 4 0l3 10-1-13q3-2 4 0l1 13 3-13q3-1 4 1l-2 14 5-9q3-1 3 2-3 10-8 20-9 4-14-3z"/>
			<path d="M6 126l22 22M28 126L6 148M6 131v-5h5M23 126h5v5M6 143v5h5M33 153l6 6"/><circle cx="30" cy="148" r="8"/><path d="M20 168h6"/>
			<path d="M19 182h7v24h-7zM18 189q-12 3-11 7 2 5 16 5t15-5q0-4-11-7M12 199l5 4-5 4M23 178v4M20 222h6"/>
			<path d="M7 238h8v8H7zM19 238h8v8h-8zM31 238h8v8h-8zM7 251h23v19H7z"/><path fill="#222" d="M14 256l9 4-9 5z"/>
		</svg>
	`);

	define("model-view", `
		<style>
		:host { display: flex; flex-direction: column; flex: 1; min-width: 0; border-left: 2px solid #ccc; border-right: 2px solid #ddd; margin-top: 1px; }
		.view { position: relative; flex: 1; overflow: hidden; background: #000; color: #e4e4e4; }
		.name { padding: 9px 8px; font: 15px/22px "Liberation Mono", "Noto Sans CJK SC", monospace; }
		.scene { position: absolute; left: 0; top: 0; fill: none; }
		.win { position: absolute; right: 14px; top: 12px; display: flex; gap: 11px; }
		.win button { border: 0; padding: 0; background: none; color: #e8e8e8; }
		.win cad-icon { width: 17px; height: 17px; }
		view-cube { position: absolute; right: 14px; top: 44px; }
		nav-bar { position: absolute; right: 4px; top: 247px; }
		support-dialog { position: absolute; left: 176px; top: 62px; width: 644px; height: 370px; }
		.cursor { position: absolute; left: 566px; top: 166px; }
		.tabs { display: flex; height: 22px; background: #eee; }
		.tabs button { border: 0; border-right: 1px solid #aaa; background: none; padding: 0; width: 20px; font: 13px/20px "DejaVu Sans", sans-serif; color: #666; }
		.tabs a { color: #111; text-decoration: none; line-height: 21px; padding: 0 10px; }
		.tabs a.on { background: #000; color: #eee; padding: 0 15px; clip-path: polygon(0 0, 100% 0, 88% 100%, 10% 100%); }
		.tabs a.next { padding-left: 7px; }
		.tabs s { width: 1px; background: #444; transform: skewX(-20deg); }
		</style>
		<div class="view">
			<svg class="scene" width="1620" height="645"></svg>
			<div class="name">[-][俯视][二维线框]</div>
			<div class="win">${icons("minimize restore close", "视口")}</div>
			<view-cube></view-cube>
			<nav-bar></nav-bar>
			<support-dialog></support-dialog>
			<svg class="cursor" width="44" height="54"><circle cx="22" cy="22" r="20" fill="#5cb85c" fill-opacity=".8"/><path fill="#fff" stroke="#222" d="M22 23v25l6-5 4 9 4-2-4-9h8z"/></svg>
		</div>
		<div class="tabs">
			<button type="button" aria-label="第一个">|◀</button><button type="button" aria-label="上一个">◀</button><button type="button" aria-label="下一个">▶</button><button type="button" aria-label="最后一个">▶|</button>
			<a href="#model" class="on">模型</a><a href="#layout1" class="next">布局1</a><s></s><a href="#layout2">布局2</a><s></s>
		</div>
	`, function(root) {
		// grid lines, then the two lattice columns, then the UCS mark
		let out = "";
		for (let i = 0; i < 7; i++) {
			let y = Math.round(57 + i * 86);
			out += `<path stroke="#e4e4e4" stroke-width="1.5" d="M444 ${y}.5H1308"/>`;
		}
		[[417, 424, 444], [990, 983, 965]].forEach(col => {
			out += `<path stroke="#a01522" stroke-width="2" d="M${col[0]} 43V617M${col[1]} 43V617"/>`;
			out += `<path stroke="#d4dc40" stroke-width="2" d="M${col[2]} 57V603"/>`;
			[col[0], col[1]].forEach(x => {
				let d = `M${x} 43`;
				for (let k = 0; k < 20; k++) {
					d += `L${col[2]} ${Math.round(57 + k * 28.7)}L${x} ${Math.round(43 + (k + 1) * 28.7)}`;
				}
				out += `<path stroke="#2fdc2f" stroke-width="1.5" d="${d}"/>`;
			});
		});
		out += '<path stroke="#ddd" stroke-width="2" d="M417 547v70h69"/><path stroke="#eee" stroke-width="1.5" d="M410.5 610.5h13v13h-13zM494 597l18 18M512 597l-18 18M419 522l9 9 9-9M428 531v9"/>';
		root.querySelector(".scene").innerHTML = out;
	});

	define("command-line", `
		<style>
		:host { display: flex; height: 71px; flex: none; margin: 8px 0 2px; }
		.grip { width: 22px; border-radius: 5px 0 0 5px; background: #9c9c9c; }
		.grip::before { content: ""; display: block; width: 18px; height: 6px; margin: 3px 0 0 2px; background: radial-gradient(#333 1px, transparent 1px) 0 0 / 3px 3px; }
		.main { flex: 1; display: flex; flex-direction: column; }
		.log { height: 47px; box-sizing: border-box; padding: 0 3px; background: #c6c6c6; border-bottom: 1px solid #999; font: 16px/21px "DejaVu Sans Mono", monospace; white-space: pre; }
		b { font: 19px/1px "Noto Sans CJK SC", sans-serif; }
		input { flex: 1; border: 0; padding: 0 4px; background: #f9f9f9; font: 16px "DejaVu Sans Mono", monospace; }
		</style>
		<span class="grip"></span>
		<div class="main">
			<div class="log"><div><b>命令</b>: _.erase <b>找到</b> 1 <b>个</b></div><div><b>命令</b>: NODECON_DEFINE</div></div>
			<input type="text" aria-label="命令">
		</div>
	`);

	define("status-bar", `
		<style>
		:host { display: flex; height: 31px; flex: none; border-top: 2px solid #222; box-sizing: border-box; background: linear-gradient(#949494, #7c7c7c); font-size: 17px; }
		.pos { width: 318px; padding-left: 15px; font: 14px/32px "Liberation Mono", monospace; white-space: pre; color: #111; }
		.left, .right { display: flex; }
		.left { flex: 1; }
		button { box-sizing: border-box; width: 31px; padding: 0 0 0 2px; border: 0; border-left: 1px solid #444; background: linear-gradient(#c4c4c4, #a4a4a4); color: #222; font: inherit; }
		.left button:nth-child(4), .left button:nth-child(6), .left button:nth-child(8), .left button:nth-child(9), .left button:nth-child(12) { background: #b4dde4; }
		.right .m { width: 42px; padding: 0; }
		.right .b { width: 44px; padding-left: 8px; background: #888; }
		.gap { width: 173px; background: #999; }
		.c { width: 16px; padding: 0; font-size: 10px; }
		cad-icon { width: 23px; height: 23px; }
		</style>
		<div class="pos">43286.3656,  64374.8293, 0.0000</div>
		<div class="left">${icons("s1 s2 s3 s4 s5 s6 s7 s8 s9 s10 s11 s12 s13 s14", "状态")}</div>
		<div class="right">
			<button type="button" class="m">模型</button>${icons("model qview", "布局")}<span class="gap"></span>${icons("gear slock chip", "设置")}<button type="button" class="b" aria-label="隔离"><cad-icon name="bulb"></cad-icon></button><button type="button" class="c">▼</button>${icons("win", "全屏")}
		</div>
	`);

	define("task-button", `
		<style>
		:host { display: block; width: 224px; }
		button { display: flex; align-items: center; gap: 6px; width: 100%; height: 53px; box-sizing: border-box; padding: 0 0 0 12px; border: 2px solid #b4c0d0; border-radius: 3px; background: linear-gradient(110deg, #a3b1c4, #76879f 50%, #8293ab); color: #fff; font: inherit; }
		:host([on]) button { background: linear-gradient(110deg, #c8d0da, #9eabbc 60%, #b9c3d0); border-color: #e0e6ee; }
		cad-icon { width: 45px; height: 45px; }
		</style>
		<button type="button"><b class="icon"></b><slot></slot></button>
	`, function(root) {
		placeIcon(this, root);
	});

	define("task-bar", `
		<style>
		:host { display: flex; align-items: center; height: 54px; flex: none; background: linear-gradient(#74859b, #8091ab); color: #fff; }
		.start { border: 0; padding: 0; margin-left: 10px; background: none; }
		.start cad-icon { width: 52px; height: 50px; }
		.dots { width: 13px; height: 42px; margin: 0 32px 0 17px; background: radial-gradient(#33425a 1px, transparent 1px) 0 0 / 4px 6px; }
		.ie { width: 44px; height: 44px; margin-right: 24px; }
		task-button { margin-right: 4px; }
		.tray { flex: 1; display: flex; justify-content: flex-end; align-items: center; gap: 10px; padding-top: 2px; }
		.small { font-size: 10px; line-height: 16px; margin: 0 4px; }
		.clock { width: 94px; text-align: center; line-height: 25px; margin: 0 3px 0 7px; }
		.show { align-self: stretch; width: 18px; margin-left: 3px; border: 1px solid #3c4a5c; background: linear-gradient(90deg, #4f6078, #8ea0b6); }
		.tray .dots { margin: 12px 0 0; height: 24px; }
		</style>
		<button type="button" class="start" aria-label="开始"><cad-icon name="start"></cad-icon></button>
		<span class="dots"></span>
		<cad-icon class="ie" name="ie"></cad-icon>
		<task-button icon="tencent">腾讯课堂</task-button>
		<task-button icon="acad" on>3D3S14.0.2_win3...</task-button>
		<task-button icon="wps">轩锐网架、网壳...</task-button>
		<div class="tray">
			<span class="dots"></span>
			<cad-icon name="kbd"></cad-icon>
			<div class="small">❐<br>▼</div>
			<cad-icon name="tTencent"></cad-icon><cad-icon name="cam"></cad-icon><cad-icon name="bell"></cad-icon><cad-icon name="swirl"></cad-icon><cad-icon name="safe"></cad-icon><cad-icon name="plug"></cad-icon><cad-icon name="vol"></cad-icon><cad-icon name="bars"></cad-icon>
			<div class="clock">20:38<br>2018/9/20</div>
		</div>
		<button type="button" class="show" aria-label="显示桌面"></button>
	`);

	define("class-bar", `
		<style>
		:host { display: flex; align-items: center; box-sizing: border-box; height: 40px; border-radius: 8px; background: #363f3c; }
		button { width: 80px; border: 0; padding: 0; background: none; color: #b8bcba; font: inherit; white-space: nowrap; }
		.off { width: auto; margin: 0 12px 0 auto; }
		cad-icon { width: 26px; height: 26px; }
		</style>
		<button type="button">画板</button><button type="button">签到</button><button type="button">答题卡</button><button type="button">画中画</button><button type="button">举手</button><button type="button">预览</button><button type="button">工具</button>
		<button type="button" class="off" aria-label="退出"><cad-icon name="power"></cad-icon></button>
	`);

	define("speed-ball", `
		<style>
		:host { display: flex; align-items: center; width: 178px; height: 66px; }
		.ball { position: relative; flex: none; box-sizing: border-box; width: 66px; height: 66px; border: 3px solid #e4e4e4; border-radius: 50%; background: linear-gradient(#178a4c, #2f9c62 38%, #4fdc58 39%, #55e860); box-shadow: 0 0 3px #333; color: #fff; text-align: center; font: 20px/60px "Liberation Sans", sans-serif; }
		.pill { box-sizing: border-box; width: 146px; height: 54px; margin-left: -34px; padding: 6px 0 0 37px; border: 1px solid #aaa; border-radius: 27px; background: #e6e6e6; box-shadow: 0 2px 4px rgba(0,0,0,.4); display: grid; grid-template: 21px 21px / 14px 52px 30px; font-size: 14px; line-height: 21px; text-align: right; }
		.up, .down { text-align: left; font-weight: bold; }
		.up { color: #d03030; }
		.down { color: #1c9c50; }
		svg { grid-area: 1 / 3 / 3 / 4; width: 30px; height: 42px; }
		</style>
		<div class="ball">63%</div>
		<div class="pill">
			<span class="up">↑</span><span>10.8K/s</span><span class="down">↓</span><span>2.6K/s</span>
			<svg viewBox="0 0 30 42"><circle cx="19" cy="22" r="11" fill="#3478cc"/><path stroke="#fff" stroke-width="3" d="M13 22h12M19 16v12"/><circle cx="27" cy="13" r="5" fill="#d81c30"/></svg>
		</div>
	`);

	define("cad-desktop", `
		<style>
		:host { display: flex; flex-direction: column; position: relative; height: 100vh; background: #666; }
		.work { flex: 1; min-height: 0; display: flex; }
		.dock { width: 209px; flex: none; margin: 2px 6px 4px 0; display: flex; flex-direction: column; gap: 6px; }
		.center { flex: 1; min-width: 0; display: flex; flex-direction: column; }
		.row { flex: 1; min-height: 0; display: flex; }
		.row model-view { margin: 1px 6px 0; }
		.row side-tools:last-child { margin-right: 3px; }
		.app { position: absolute; left: 1px; top: 2px; width: 54px; height: 54px; padding: 0; display: flex; align-items: center; border: 1px solid #333; background: linear-gradient(#b8b8b8, #6d6d6d); }
		.app cad-icon { width: 40px; height: 48px; }
		.app i { border: 5px solid transparent; border-top: 6px solid #222; border-bottom: 0; }
		.mark { position: absolute; right: 42px; top: 28px; display: flex; align-items: center; gap: 24px; font: bold 45px/46px "Noto Sans CJK SC", sans-serif; color: #e0001c; }
		.mark span { font: bold 40px/30px "DejaVu Sans Mono", monospace; padding-top: 14px; }
		.frame { position: absolute; inset: 0 0 53px 0; border: 2px solid #c84c5a; border-width: 2px 1px; pointer-events: none; }
		.frame u { position: absolute; width: 30px; height: 5px; background: #e00010; }
		.frame u.mid { left: 48%; width: 84px; height: 2px; }
		class-bar { position: absolute; left: 668px; right: 459px; bottom: 28px; }
		speed-ball { position: absolute; right: 190px; bottom: 56px; }
		</style>
		<title-bar>3D3S14.0.2_win32 for AutoCAD 2012      2.dwg</title-bar>
		<ribbon-tabs></ribbon-tabs>
		<ribbon-bar></ribbon-bar>
		<tool-row></tool-row>
		<div class="work">
			<div class="dock"><tool-palette></tool-palette><info-tree></info-tree></div>
			<div class="center">
				<div class="row">
					<side-tools label="绘图" icons="line xline pline pgon rect arc circle cloud spline ellipse earc insb mkb pt hatch grad region table mtext"></side-tools>
					<model-view></model-view>
					<side-tools label="修改" icons="erase copy mirror offs array move rotate scale stretch trim ext brk1 brk2 join chamf fillet explode"></side-tools>
				</div>
				<command-line></command-line>
			</div>
		</div>
		<status-bar></status-bar>
		<task-bar></task-bar>
		<button type="button" class="app" aria-label="应用程序菜单"><cad-icon name="logo"></cad-icon><i></i></button>
		<div class="mark"><span>***</span>制作</div>
		<div class="frame"><u style="left:0;bottom:-4px"></u><u style="right:0;bottom:-4px"></u><u style="left:0;top:-3px"></u><u style="right:0;top:-3px"></u><u class="mid" style="top:-2px"></u></div>
		<class-bar></class-bar>
		<speed-ball></speed-ball>
	`);
})();
</script>
</body>
</html>
